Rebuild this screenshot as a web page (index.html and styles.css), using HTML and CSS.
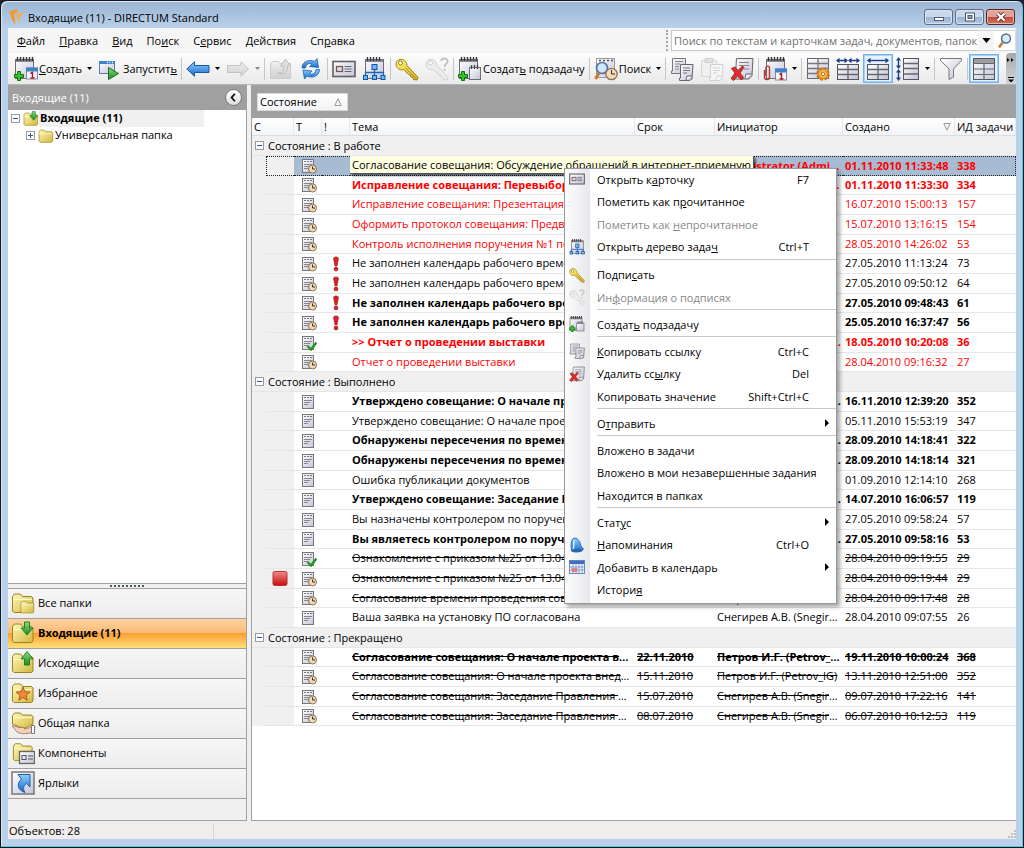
FILE: index.html
```html
<!DOCTYPE html>
<html lang="ru">
<head>
    <meta charset="UTF-8">
    <meta name="viewport" content="width=device-width, initial-scale=1.0">
    <title>Входящие (11) - DIRECTUM Standard</title>
    <link rel="stylesheet" href="styles.css">
</head>
<body>

<!-- icon sprite -->
<svg class="sprite" aria-hidden="true">
    <defs>
        <linearGradient id="g-folder" x1="0" y1="0" x2="1" y2="1"><stop offset="0" stop-color="#fff8b8"/><stop offset="1" stop-color="#d3b83e"/></linearGradient>
        <linearGradient id="g-paper" x1="0" y1="0" x2="1" y2="1"><stop offset="0" stop-color="#ffffff"/><stop offset="1" stop-color="#c3c3d8"/></linearGradient>
        <linearGradient id="g-green" x1="0" y1="0" x2="0" y2="1"><stop offset="0" stop-color="#8fdc7c"/><stop offset="1" stop-color="#1c8a1c"/></linearGradient>
        <linearGradient id="g-blue" x1="0" y1="0" x2="0" y2="1"><stop offset="0" stop-color="#8fd0ff"/><stop offset="1" stop-color="#1668c8"/></linearGradient>
        <linearGradient id="g-gray" x1="0" y1="0" x2="0" y2="1"><stop offset="0" stop-color="#f0f0f0"/><stop offset="1" stop-color="#cfcfcf"/></linearGradient>
        <linearGradient id="g-key" x1="0" y1="0" x2="1" y2="1"><stop offset="0" stop-color="#fff27a"/><stop offset="1" stop-color="#d8b023"/></linearGradient>
        <linearGradient id="g-red" x1="0" y1="0" x2="0" y2="1"><stop offset="0" stop-color="#f58b8b"/><stop offset="1" stop-color="#c80a0a"/></linearGradient>
    </defs>
    <symbol id="pad" viewBox="0 0 24 24">
        <rect x="1.500" y="2.500" width="18" height="19" fill="url(#g-paper)" stroke="#6d6d75"/>
        <path d="M2 3h17v2H2z" fill="#8a8a92"/>
        <path d="M3.500 0v4M6.500 0v4M9.500 0v4M12.500 0v4M15.500 0v4M18.500 0v4" stroke="#33333a" stroke-width="1.400"/>
    </symbol>
    <symbol id="plus" viewBox="0 0 10 10"><path d="M3.500.5h3v3h3v3h-3v3h-3v-3h-3v-3h3z" fill="#3cc02a" stroke="#0f7410"/></symbol>
    <symbol id="cal" viewBox="0 0 12 12">
        <rect x=".5" y=".5" width="11" height="11" fill="#f4f4fa" stroke="#8c8ca0"/>
        <path d="M0 0h12v4H0z" fill="#3c83cc"/><path d="M4.500 6l2-1v5M4.500 10.500h4" stroke="#a02020" stroke-width="1.400" fill="none"/>
    </symbol>
    <symbol id="create" viewBox="0 0 24 24"><use href="#pad" width="24" height="24"/><use href="#cal" x="12" y="10" width="12" height="13"/><use href="#plus" x="0" y="14" width="10" height="10"/></symbol>
    <symbol id="run" viewBox="0 0 24 24">
        <rect x="1.500" y="4.500" width="15" height="12" fill="url(#g-paper)" stroke="#4f7fb4"/><path d="M1 4h16v3H1z" fill="#3c83cc"/><path d="M9 5.500h1M11.500 5.500h1M14 5.500h1" stroke="#fff" stroke-width="1.500"/>
        <path d="M10.500 10.500v12l10-6z" fill="url(#g-green)" stroke="#12731a"/>
    </symbol>
    <symbol id="back" viewBox="0 0 24 24"><path d="M.8 12L8.500 4.800v3.700h14.500v7H8.500v3.700z" fill="url(#g-blue)" stroke="#1a56a8"/></symbol>
    <symbol id="forward" viewBox="0 0 24 24"><path d="M22.500 12L15 4.800v3.700H1.500v7H15v3.700z" fill="url(#g-gray)" stroke="#c3c3c3"/></symbol>
    <symbol id="up" viewBox="0 0 24 24"><path d="M1.500 21.500v-15l2-2h6l2 2h10v15z" fill="url(#g-gray)" stroke="#cccccc"/><path d="M9 16c5 .5 6-2 5.500-7h-3l5-7 5 7h-3c.5 7-4 9-9.500 7z" fill="#dedede" stroke="#bdbdbd"/></symbol>
    <symbol id="refresh" viewBox="0 0 24 24">
        <path d="M3 11c0-7 8-9 12.500-6.500L18 1.500l1.500 9-9-1 2.500-2.500c-3-1.500-6 0-6.500 4z" fill="url(#g-blue)" stroke="#1860b4" stroke-width=".8"/>
        <path d="M20.500 12.500c0 7-8 9-12.500 6.500L5.500 22 4 13l9 1-2.500 2.500c3 1.500 6 0 6.500-4z" fill="url(#g-blue)" stroke="#1860b4" stroke-width=".8"/>
    </symbol>
    <symbol id="card" viewBox="0 0 24 24"><rect x="1" y="4.500" width="22" height="15" fill="url(#g-paper)" stroke="#5f5f68" stroke-width="1.600"/><rect x="4.500" y="9.500" width="6" height="5" fill="#e8dada" stroke="#6d5a5a" stroke-width="1.300"/><path d="M12.500 9.500h7M12.500 12h7M12.500 14.500h7" stroke="#66666e" stroke-width="1.200"/></symbol>
    <symbol id="tree" viewBox="0 0 24 24">
        <rect x="3.500" y="2.500" width="18" height="19" fill="url(#g-paper)" stroke="#6d6d75"/><path d="M4 3h17v2H4z" fill="#8a8a92"/><path d="M5.500 0v4M8.500 0v4M11.500 0v4M14.500 0v4M17.500 0v4" stroke="#33333a" stroke-width="1.300"/>
        <path d="M12.500 11v9M3.500 20v-4.500h18V20" stroke="#1d66b8" stroke-width="1.300" fill="none"/>
        <g fill="#6db8f8" stroke="#0e54a8"><rect x="10" y="7.500" width="5" height="5"/><rect x="1.500" y="18.500" width="4" height="4"/><rect x="10.500" y="18.500" width="4" height="4"/><rect x="19" y="18.500" width="4" height="4"/></g>
    </symbol>
    <symbol id="key" viewBox="0 0 24 24"><path d="M12 8.500l11 12-1 2.500-3.500-.5-.5-2-2-.5-.5-2-2-.5-5-5C4 14 1 10 1 7c0-6 10-7 11 1.500z" fill="url(#g-key)" stroke="#a08010"/><circle cx="5.500" cy="6" r="2" fill="#fff" stroke="#a08010"/><path d="M10.500 11l10.500 10.500" stroke="#a88a18" fill="none"/></symbol>
    <symbol id="key-info" viewBox="0 0 24 24"><path d="M12 8.500l11 12-1 2.500-3.500-.5-.5-2-2-.5-.5-2-2-.5-5-5C4 14 1 10 1 7c0-6 10-7 11 1.500z" fill="#ededed" stroke="#cecece"/><circle cx="5.500" cy="6" r="2" fill="#fff" stroke="#cecece"/><path d="M16 4c1-3.500 7-3 6.500.5-.3 2.500-3 2.500-3 5.500M19.500 12v2" stroke="#c4c4c4" stroke-width="2" fill="none"/></symbol>
    <symbol id="subtask" viewBox="0 0 24 24"><use href="#pad" width="24" height="24"/><rect x="11.500" y="10.500" width="11" height="12" fill="url(#g-paper)" stroke="#6d6d75"/><path d="M13.500 8v4M16.500 8v4M19.500 8v4" stroke="#44444c" stroke-width="1.300"/><use href="#plus" x="0" y="14" width="10" height="10"/></symbol>
    <symbol id="find" viewBox="0 0 24 24">
        <rect x="2.500" y="1.500" width="18" height="19" fill="url(#g-paper)" stroke="#9a9aa2"/><path d="M5 3.500h2M9 3.500h2M13 3.500h2M17 3.500h2" stroke="#55555c" stroke-width="1.500"/>
        <circle cx="8" cy="11" r="5.500" fill="#cfe6fb" stroke="#55749c" stroke-width="1.700"/><path d="M5 16l-3.500 6" stroke="#d2772a" stroke-width="3"/>
        <circle cx="17.500" cy="17" r="5.700" fill="#f2dbb8" stroke="#8c7258" stroke-width="1.300"/><path d="M17.500 13v4h3.500" stroke="#333" fill="none"/>
    </symbol>
    <symbol id="copy" viewBox="0 0 24 24">
        <path d="M2.500 1.500h13v15h-14v-2.500h1z" fill="url(#g-paper)" stroke="#77777e"/><path d="M5 4.500h8M5 7h5M5 9.500h4M5 12h4" stroke="#85858c"/>
        <path d="M10.500 7.500h12.500l-1 14.500-2.500 1.500h-10v-2.500h1z" fill="url(#g-paper)" stroke="#66666d"/><path d="M13 11h7M13 13.500h7M13 16h4" stroke="#77777e"/><path d="M16 23l1-4h5" fill="#fff" stroke="#66666d"/>
    </symbol>
    <symbol id="paste" viewBox="0 0 24 24"><path d="M1.500 3.500h15v16h-15z" fill="#f0f0f0" stroke="#d6d6d6"/><path d="M5 1.500h8v4H5z" fill="#e2e2e2" stroke="#d0d0d0"/><path d="M10.500 7.500h12.500l-1 14.500-2.500 1.500h-10v-2.500h1z" fill="#f6f6f6" stroke="#d0d0d0"/><path d="M13 11h7M13 13.500h7M13 16h4M16 23l1-4h5" fill="none" stroke="#d4d4d4"/></symbol>
    <symbol id="unlink" viewBox="0 0 24 24"><path d="M6.500 1.500h16.500l-1 17-3 3.500H4.500v-4h1z" fill="url(#g-paper)" stroke="#66666d"/><path d="M9 5.500h10M9 8.500h10M14 12h5" stroke="#85858c"/><path d="M15 21.500l1-4.500h6" fill="#fff" stroke="#66666d"/><path d="M1.500 11.500L5 10l3 3.500L12.500 9l1.500 1.500-4 5.500 3.500 4.500-2 2.500-4-4L3.500 23.500l-2.500-2L5 16z" fill="#de2f2f" stroke="#9c1010" stroke-width=".8"/></symbol>
    <symbol id="attach" viewBox="0 0 24 24"><use href="#pad" x="2" width="24" height="24"/><path d="M1.500 13v7c0 3.500 5 3.500 5 0v-9c0-2.500-3.500-2.500-3.500 0v8" fill="none" stroke="#b03838" stroke-width="1.400"/><use href="#cal" x="12" y="11" width="12" height="13"/></symbol>
    <symbol id="grid-gear" viewBox="0 0 24 24">
        <rect x="1.500" y="1.500" width="21" height="20" fill="url(#g-paper)" stroke="#66666d"/><path d="M1.500 6.500h21M1.500 11.500h21M1.500 16.500h21M12 1.500v20" stroke="#77777e" stroke-width="1.300"/>
        <circle cx="17" cy="17" r="5.500" fill="#f5a732" stroke="#c9741a" stroke-width="2.500" stroke-dasharray="2.600 1.700"/><circle cx="17" cy="17" r="4.500" fill="#f9b548" stroke="#d98820"/><circle cx="17" cy="17" r="1.700" fill="#fff" stroke="#c9741a"/>
    </symbol>
    <symbol id="grid" viewBox="0 0 24 24"><rect x="1.500" y="1.500" width="21" height="21" fill="url(#g-paper)" stroke="#55555c"/><path d="M2 2h20v4H2z" fill="#9c9ca2"/><path d="M1.500 6.500h21M1.500 12h21M1.500 17.500h21M12 6.500v16" stroke="#66666d" stroke-width="1.200"/></symbol>
    <symbol id="grid-low" viewBox="0 0 24 24"><rect x="1.500" y="7.500" width="21" height="15" fill="url(#g-paper)" stroke="#55555c"/><path d="M1.500 12.500h21M1.500 17.500h21M12 8v14" stroke="#66666d" stroke-width="1.300"/></symbol>
    <symbol id="cols" viewBox="0 0 24 24"><use href="#grid-low" width="24" height="24"/><path d="M1.500 3.500h9M13.500 3.500h9" stroke="#1a3f8c" stroke-width="1.400"/><path d="M0 3.500L3.500.8v5.400zM12 3.500L8.500.8v5.400zM12 3.500L15.500.8v5.400zM24 3.500L20.500.8v5.400z" fill="#1a3f8c"/></symbol>
    <symbol id="fit" viewBox="0 0 24 24"><use href="#grid-low" width="24" height="24"/><path d="M2 3.500h20" stroke="#1a3f8c" stroke-width="1.400"/><path d="M1 3.500L4.500.8v5.400zM23 3.500L19.500.8v5.400z" fill="#1a3f8c"/></symbol>
    <symbol id="rows" viewBox="0 0 24 24"><rect x="7.500" y="1.500" width="15" height="21" fill="url(#g-paper)" stroke="#55555c"/><path d="M7.500 6.500h15M7.500 11.500h15M7.500 17h15" stroke="#66666d" stroke-width="1.300"/><path d="M2.500 2v9M2.500 14v8" stroke="#1a3f8c" stroke-width="1.400"/><path d="M2.500 0l2.500 3.500H0zM2.500 12L0 8.500h5zM2.500 12L5 15.500H0zM2.500 24L0 20.500h5z" fill="#1a3f8c"/></symbol>
    <symbol id="funnel" viewBox="0 0 24 24"><path d="M1.500 1.500h21v2l-8 8.500v8l-4.500 2.500V12L1.500 3.500z" fill="url(#g-paper)" stroke="#77777e"/></symbol>
    <symbol id="folder" viewBox="0 0 24 24"><path d="M1.500 20V5.500l2-2.500h6l2 2.500h9l1.500 1.500V20l-1.500 1.500H3z" fill="url(#g-folder)" stroke="#9a8420"/><path d="M2 8.500h19" stroke="#fffbd0"/></symbol>
    <symbol id="inbox" viewBox="0 0 24 24"><use href="#folder" width="24" height="24"/><path d="M13.500 1h5v6H22l-6 7-6-7h3.500z" fill="url(#g-green)" stroke="#23802a"/></symbol>
    <symbol id="outbox" viewBox="0 0 24 24"><use href="#folder" width="24" height="24"/><path d="M13.500 14h5V8H22l-6-7.500L10 8h3.500z" fill="url(#g-green)" stroke="#23802a"/></symbol>
    <symbol id="folders" viewBox="0 0 24 24"><use href="#folder" width="24" height="24"/><use href="#folder" x="9" y="8" width="15" height="16"/></symbol>
    <symbol id="favorite" viewBox="0 0 24 24"><use href="#folder" width="24" height="24"/><path d="M12 6l1.900 4.800 5 .3-3.900 3.200 1.300 5-4.300-2.800-4.300 2.800 1.300-5L5.100 11.100l5-.3z" fill="#ee8a3c" stroke="#b85a18"/></symbol>
    <symbol id="shared" viewBox="0 0 24 24"><path d="M1.500 13V4.500l2-2.500h6l2 2h9l1.500 1.500V13l-8 4-5-1z" fill="url(#g-folder)" stroke="#9a8420"/><path d="M2 6.500h19" stroke="#fffbd0"/><path d="M1 15c3-1 5 2 9 1.500 2-.5 4 0 3 1.500l6-1.500 2-1v6c-5 1.500-10 1.500-13 .5-3-1-4-4-7-7z" fill="#f4d0b4" stroke="#94705a" stroke-width=".8"/><path d="M20.500 14.500h3v8h-3z" fill="#fff" stroke="#77777e"/></symbol>
    <symbol id="components" viewBox="0 0 24 24"><use href="#folder" width="24" height="22"/><rect x="8.500" y="10.500" width="15" height="12" fill="url(#g-paper)" stroke="#66666d" stroke-width="1.300"/><rect x="11" y="14.500" width="4" height="4" fill="none" stroke="#55555c"/><path d="M17 15h5M17 18h5" stroke="#55555c"/></symbol>
    <symbol id="shortcut" viewBox="0 0 24 24"><rect x="1" y="1" width="22" height="22" fill="url(#g-paper)" stroke="#77777e" stroke-width="1.500"/><path d="M7 3.500h12V16l-3.500-3.500c-3 2.500-4 5-1.500 9-7-2-9-8.500-3.500-13.500z" fill="url(#g-blue)" stroke="#1a60b0"/></symbol>
    <symbol id="bell" viewBox="0 0 16 16"><path d="M4 1.500c4-1.500 6.500 2 7.500 6 .5 2 1.500 3 3 4.500-2 3-8 4-12 2C2.500 11 1 5 4 1.500z" fill="url(#g-blue)" stroke="#2868b0"/><path d="M5 3c0 3-.5 6-.5 9" stroke="#cfeaff" stroke-width="1.500" fill="none"/><ellipse cx="8.500" cy="13.200" rx="5" ry="1.500" fill="#2a66ae"/></symbol>
    <symbol id="calendar" viewBox="0 0 16 16"><rect x=".5" y="1.500" width="15" height="13" fill="#f4f7fc" stroke="#6a86b4"/><path d="M1 2h14v3H1z" fill="#3c6fc0"/><path d="M1 8h14M1 11h14M4 5v9M7 5v9M10 5v9M13 5v9" stroke="#86a0cc"/><path d="M2.500 9h6v4h-6z" fill="#e06a6a" opacity=".7"/></symbol>
    <symbol id="t-doc" viewBox="0 0 16 16"><rect x="1.500" y="1.500" width="11" height="13" fill="url(#g-paper)" stroke="#77777e"/><path d="M3 3.500h2M6 3.500h2M9 3.500h2" stroke="#77777e"/><path d="M3 6.500h8M3 8.500h6M3 10.500h4" stroke="#85858c"/></symbol>
    <symbol id="t-clock" viewBox="0 0 16 16"><use href="#t-doc" width="16" height="16"/><circle cx="11.500" cy="11" r="4" fill="#f0dab6" stroke="#8c7258"/><path d="M11.500 8.500V11H14" stroke="#333" fill="none"/></symbol>
    <symbol id="t-check" viewBox="0 0 16 16"><use href="#t-doc" width="16" height="16"/><path d="M6.500 11l3.500 3.500 5.500-7" stroke="#22961e" stroke-width="2.400" fill="none"/></symbol>
    <symbol id="urgent" viewBox="0 0 8 16"><path d="M1.500 2.500c0-2 5-2 5 0L5 10H3z" fill="#d8242a" stroke="#a01418" stroke-width=".6"/><circle cx="4" cy="13" r="2" fill="#d8242a" stroke="#a01418" stroke-width=".6"/></symbol>
    <symbol id="stop" viewBox="0 0 16 16"><rect x=".5" y=".5" width="15" height="15" rx="2" fill="url(#g-red)" stroke="#b83030"/></symbol>
    <symbol id="caret" viewBox="0 0 5 3"><path d="M0 0h5L2.500 3z" fill="currentColor"/></symbol>
    <symbol id="arrow" viewBox="0 0 4 8"><path d="M0 0v8l4-4z"/></symbol>
    <symbol id="minus-box" viewBox="0 0 9 9"><rect x=".5" y=".5" width="8" height="8" fill="#fff" stroke="#9a9a9a"/><path d="M2 4.500h5" stroke="#3c50a0"/></symbol>
    <symbol id="plus-box" viewBox="0 0 9 9"><rect x=".5" y=".5" width="8" height="8" fill="#fff" stroke="#9a9a9a"/><path d="M2 4.500h5M4.500 2v5" stroke="#3c50a0"/></symbol>
    <symbol id="magnifier" viewBox="0 0 16 16"><path d="M5.500 9.500L2 14.500" stroke="#d2772a" stroke-width="2.500"/><circle cx="9" cy="5.500" r="4.500" fill="#d5ebfb" stroke="#5a6f86" stroke-width="1.500"/></symbol>
</svg>

<div class="window">
    <header class="titlebar">
        <svg class="logo" viewBox="0 0 16 16" aria-hidden="true"><path d="M.5 4C3 2 6 .8 10 .3L8.800 3.500C6.500 4 6 5 6.300 6.500c.5 3 1.200 5 .9 9C5 13 3.300 10.500 3 7.500 2.800 5.500 2.300 4.500.5 4z" fill="#f39a2b"/><path d="M7.500 6.500c2-1.700 4-2.500 7.500-3L14 6.500c-2 .3-2.700 1-2.500 2.500.2 1.500.3 2.500.1 4.500C10 12 9.300 10.500 9.200 9c-.1-1.200-.6-2-1.700-2.500z" fill="#f7ad4a"/></svg>
        <h1>Входящие (11) - DIRECTUM Standard</h1>
        <div class="window-buttons">
            <button type="button" aria-label="Свернуть"><svg viewBox="0 0 12 10" aria-hidden="true"><rect x="1.500" y="5.500" width="9" height="3" fill="#fff" stroke="#4d5b70"/></svg></button>
            <button type="button" aria-label="Развернуть"><svg viewBox="0 0 12 10" aria-hidden="true"><rect x="1.500" y="1" width="9" height="8" fill="#fff" stroke="#4d5b70"/><rect x="4" y="3.500" width="4" height="3" fill="#8fa5c2" stroke="#4d5b70"/></svg></button>
            <button type="button" class="close" aria-label="Закрыть"><svg viewBox="0 0 12 10" aria-hidden="true"><path d="M2.500 1.500l7 7M9.500 1.500l-7 7" stroke="#5a2a2a" stroke-width="4"/><path d="M2.500 1.500l7 7M9.500 1.500l-7 7" stroke="#fff" stroke-width="2.400"/></svg></button>
        </div>
    </header>

    <div class="menubar">
        <nav>
            <a href="#"><u>Ф</u>айл</a>
            <a href="#"><u>П</u>равка</a>
            <a href="#"><u>В</u>ид</a>
            <a href="#">По<u>и</u>ск</a>
            <a href="#">С<u>е</u>рвис</a>
            <a href="#"><u>Д</u>ействия</a>
            <a href="#">Сп<u>р</u>авка</a>
        </nav>
        <form class="search">
            <input type="text" aria-label="Поиск" placeholder="Поиск по текстам и карточкам задач, документов, папок">
            <button type="button" aria-label="История поиска"><svg width="9" height="5" aria-hidden="true"><use href="#caret"/></svg></button>
            <button type="button" class="go" aria-label="Найти"><svg width="16" height="16" aria-hidden="true"><use href="#magnifier"/></svg></button>
        </form>
    </div>

    <div class="toolbar">
        <button type="button"><svg class="i24"><use href="#create"/></svg><span><u>С</u>оздать</span></button>
        <button type="button" class="drop" aria-label="Создать: меню"><svg><use href="#caret"/></svg></button>
        <button type="button"><svg class="i24"><use href="#run"/></svg><span>Запустит<u>ь</u></span></button>
        <i class="sep"></i>
        <button type="button" aria-label="Назад"><svg class="i24"><use href="#back"/></svg></button>
        <button type="button" class="drop" aria-label="Назад: меню"><svg><use href="#caret"/></svg></button>
        <button type="button" disabled aria-label="Вперед"><svg class="i24"><use href="#forward"/></svg></button>
        <button type="button" class="drop" disabled aria-label="Вперед: меню"><svg><use href="#caret"/></svg></button>
        <i class="sep"></i>
        <button type="button" disabled aria-label="Вверх"><svg class="i24"><use href="#up"/></svg></button>
        <button type="button" aria-label="Обновить"><svg class="i24"><use href="#refresh"/></svg></button>
        <i class="sep"></i>
        <button type="button" aria-label="Карточка"><svg class="i24"><use href="#card"/></svg></button>
        <button type="button" aria-label="Дерево задач"><svg class="i24"><use href="#tree"/></svg></button>
        <i class="sep"></i>
        <button type="button" aria-label="Подписать"><svg class="i24"><use href="#key"/></svg></button>
        <button type="button" disabled aria-label="Информация о подписях"><svg class="i24"><use href="#key-info"/></svg></button>
        <i class="sep"></i>
        <button type="button"><svg class="i24"><use href="#subtask"/></svg><span>Создат<u>ь</u> подзадачу</span></button>
        <i class="sep"></i>
        <button type="button"><svg class="i24"><use href="#find"/></svg><span>Поиск</span></button>
        <button type="button" class="drop" aria-label="Поиск: меню"><svg><use href="#caret"/></svg></button>
        <i class="sep"></i>
        <button type="button" aria-label="Копировать ссылку"><svg class="i24"><use href="#copy"/></svg></button>
        <button type="button" disabled aria-label="Вставить ссылку"><svg class="i24"><use href="#paste"/></svg></button>
        <button type="button" aria-label="Удалить ссылку"><svg class="i24"><use href="#unlink"/></svg></button>
        <i class="sep"></i>
        <button type="button" aria-label="Вложения"><svg class="i24"><use href="#attach"/></svg></button>
        <button type="button" class="drop" aria-label="Вложения: меню"><svg><use href="#caret"/></svg></button>
        <i class="sep"></i>
        <button type="button" aria-label="Настройка колонок"><svg class="i24"><use href="#grid-gear"/></svg></button>
        <button type="button" aria-label="Ширина колонок"><svg class="i24"><use href="#cols"/></svg></button>
        <button type="button" class="on" aria-label="По ширине окна"><svg class="i24"><use href="#fit"/></svg></button>
        <button type="button" aria-label="Высота строк"><svg class="i24"><use href="#rows"/></svg></button>
        <button type="button" class="drop" aria-label="Высота строк: меню"><svg><use href="#caret"/></svg></button>
        <i class="sep"></i>
        <button type="button" aria-label="Фильтр"><svg class="i24"><use href="#funnel"/></svg></button>
        <i class="sep"></i>
        <button type="button" class="on" aria-label="Группировка"><svg class="i24"><use href="#grid"/></svg></button>
        <button type="button" class="more" aria-label="Параметры панели"><svg width="8" height="28" viewBox="0 0 8 28" aria-hidden="true"><path d="M0 3l2.500 2L0 7zM4 3l2.500 2L4 7zM1 22h6v1H1zM1 24.500h6L4 27.500z"/></svg></button>
    </div>

    <main>
        <aside>
            <div class="side-head">
                <h2>Входящие (11)</h2>
                <button type="button" aria-label="Скрыть панель"><svg viewBox="0 0 16 16" aria-hidden="true"><path d="M9.500 4L6 8l3.500 4" fill="none" stroke="#111" stroke-width="2"/></svg></button>
            </div>
            <ul class="tree">
                <li class="current"><svg class="box"><use href="#minus-box"/></svg><svg class="i16"><use href="#inbox"/></svg><a href="#">Входящие (11)</a></li>
                <li class="child"><svg class="box"><use href="#plus-box"/></svg><svg class="i16"><use href="#folder"/></svg><a href="#">Универсальная папка</a></li>
            </ul>
            <div class="splitter"></div>
            <nav class="groups">
                <a href="#"><svg class="i24"><use href="#folders"/></svg>Все папки</a>
                <a href="#" class="active"><svg class="i24"><use href="#inbox"/></svg>Входящие (11)</a>
                <a href="#"><svg class="i24"><use href="#outbox"/></svg>Исходящие</a>
                <a href="#"><svg class="i24"><use href="#favorite"/></svg>Избранное</a>
                <a href="#"><svg class="i24"><use href="#shared"/></svg>Общая папка</a>
                <a href="#"><svg class="i24"><use href="#components"/></svg>Компоненты</a>
                <a href="#"><svg class="i24"><use href="#shortcut"/></svg>Ярлыки</a>
            </nav>
            <div class="groups-foot"></div>
        </aside>

        <section class="list">
            <div class="group-by">
                <button type="button">Состояние <svg width="8" height="8" viewBox="0 0 8 8" aria-hidden="true"><path d="M4 .8L7.200 7.500H.8z" fill="none" stroke="#999"/></svg></button>
            </div>
            <table>
                <colgroup><col class="c-indent"><col class="c-flag"><col class="c-type"><col class="c-type"><col><col class="c-due"><col class="c-from"><col class="c-date"><col class="c-id"></colgroup>
                <thead>
                    <tr><th colspan="2">С</th><th>Т</th><th>!</th><th>Тема</th><th>Срок</th><th>Инициатор</th><th>Создано <svg width="8" height="8" viewBox="0 0 8 8" aria-hidden="true"><path d="M4 7.200L7.200.5H.8z" fill="none" stroke="#999"/></svg></th><th>ИД задачи</th></tr>
                </thead>
                <tbody>
                    <tr class="group"><td colspan="9"><svg class="box"><use href="#minus-box"/></svg>Состояние : В работе</td></tr>
                    <tr class="b red selected"><td></td><td></td><td><svg class="i16"><use href="#t-clock"/></svg></td><td></td><td class="tip-cell"><div class="tooltip" role="tooltip">Согласование совещания: Обсуждение обращений в интернет-приемную</div></td><td></td><td>Administrator (Administrator)</td><td>01.11.2010 11:33:48</td><td>338</td></tr>
                    <tr class="b red"><td></td><td></td><td><svg class="i16"><use href="#t-clock"/></svg></td><td></td><td>Исправление совещания: Перевыборы председателя</td><td></td><td>Administrator (Administrator)</td><td>01.11.2010 11:33:30</td><td>334</td></tr>
                    <tr class="red"><td></td><td></td><td><svg class="i16"><use href="#t-clock"/></svg></td><td></td><td>Исправление совещания: Презентация изделий</td><td></td><td>Петров И.Г.</td><td>16.07.2010 15:00:13</td><td>157</td></tr>
                    <tr class="red"><td></td><td></td><td><svg class="i16"><use href="#t-clock"/></svg></td><td></td><td>Оформить протокол совещания: Предварительное</td><td></td><td>Петров И.Г.</td><td>15.07.2010 13:16:15</td><td>154</td></tr>
                    <tr class="red"><td></td><td></td><td><svg class="i16"><use href="#t-clock"/></svg></td><td></td><td>Контроль исполнения поручения №1 по протоколу</td><td></td><td>Снегирев А.В. (Snegirev_AV)</td><td>28.05.2010 14:26:02</td><td>53</td></tr>
                    <tr><td></td><td></td><td><svg class="i16"><use href="#t-clock"/></svg></td><td><svg class="mark"><use href="#urgent"/></svg></td><td>Не заполнен календарь рабочего времени</td><td></td><td>Снегирев А.В. (Snegirev_AV)</td><td>27.05.2010 11:13:24</td><td>73</td></tr>
                    <tr><td></td><td></td><td><svg class="i16"><use href="#t-clock"/></svg></td><td><svg class="mark"><use href="#urgent"/></svg></td><td>Не заполнен календарь рабочего времени</td><td></td><td>Снегирев А.В. (Snegirev_AV)</td><td>27.05.2010 09:50:12</td><td>64</td></tr>
                    <tr class="b"><td></td><td></td><td><svg class="i16"><use href="#t-clock"/></svg></td><td><svg class="mark"><use href="#urgent"/></svg></td><td>Не заполнен календарь рабочего времени</td><td></td><td>Петров И.Г.</td><td>27.05.2010 09:48:43</td><td>61</td></tr>
                    <tr class="b"><td></td><td></td><td><svg class="i16"><use href="#t-clock"/></svg></td><td><svg class="mark"><use href="#urgent"/></svg></td><td>Не заполнен календарь рабочего времени</td><td></td><td>Петров И.Г.</td><td>25.05.2010 16:37:47</td><td>56</td></tr>
                    <tr class="b red"><td></td><td></td><td><svg class="i16"><use href="#t-check"/></svg></td><td></td><td>&gt;&gt; Отчет о проведении выставки</td><td></td><td>Снегирев А.В. (Snegirev_AV)</td><td>18.05.2010 10:20:08</td><td>36</td></tr>
                    <tr class="red"><td></td><td></td><td><svg class="i16"><use href="#t-clock"/></svg></td><td></td><td>Отчет о проведении выставки</td><td></td><td>Петров И.Г.</td><td>28.04.2010 09:16:32</td><td>27</td></tr>
                    <tr class="group"><td colspan="9"><svg class="box"><use href="#minus-box"/></svg>Состояние : Выполнено</td></tr>
                    <tr class="b"><td></td><td></td><td><svg class="i16"><use href="#t-doc"/></svg></td><td></td><td>Утверждено совещание: О начале проекта</td><td></td><td>Снегирев А.В. (Snegirev_AV)</td><td>16.11.2010 12:39:20</td><td>352</td></tr>
                    <tr><td></td><td></td><td><svg class="i16"><use href="#t-doc"/></svg></td><td></td><td>Утверждено совещание: О начале проекта</td><td></td><td>Петров И.Г.</td><td>05.11.2010 15:53:19</td><td>347</td></tr>
                    <tr class="b"><td></td><td></td><td><svg class="i16"><use href="#t-doc"/></svg></td><td></td><td>Обнаружены пересечения по времени</td><td></td><td>Снегирев А.В. (Snegirev_AV)</td><td>28.09.2010 14:18:41</td><td>322</td></tr>
                    <tr class="b"><td></td><td></td><td><svg class="i16"><use href="#t-doc"/></svg></td><td></td><td>Обнаружены пересечения по времени</td><td></td><td>Снегирев А.В. (Snegirev_AV)</td><td>28.09.2010 14:18:14</td><td>321</td></tr>
                    <tr><td></td><td></td><td><svg class="i16"><use href="#t-doc"/></svg></td><td></td><td>Ошибка публикации документов</td><td></td><td>Петров И.Г.</td><td>01.09.2010 12:14:10</td><td>268</td></tr>
                    <tr class="b"><td></td><td></td><td><svg class="i16"><use href="#t-doc"/></svg></td><td></td><td>Утверждено совещание: Заседание Правления</td><td></td><td>Снегирев А.В. (Snegirev_AV)</td><td>14.07.2010 16:06:57</td><td>119</td></tr>
                    <tr><td></td><td></td><td><svg class="i16"><use href="#t-doc"/></svg></td><td></td><td>Вы назначены контролером по поручению</td><td></td><td>Снегирев А.В. (Snegirev_AV)</td><td>27.05.2010 09:58:24</td><td>57</td></tr>
                    <tr class="b"><td></td><td></td><td><svg class="i16"><use href="#t-doc"/></svg></td><td></td><td>Вы являетесь контролером по поручению</td><td></td><td>Снегирев А.В. (Snegirev_AV)</td><td>27.05.2010 09:58:16</td><td>53</td></tr>
                    <tr class="done"><td></td><td></td><td><svg class="i16"><use href="#t-check"/></svg></td><td></td><td>Ознакомление с приказом №25 от 13.04.2010</td><td></td><td>Петров И.Г.</td><td>28.04.2010 09:19:55</td><td>29</td></tr>
                    <tr class="done"><td></td><td><svg class="stop"><use href="#stop"/></svg></td><td><svg class="i16"><use href="#t-clock"/></svg></td><td></td><td>Ознакомление с приказом №25 от 13.04.2010</td><td></td><td>Петров И.Г.</td><td>28.04.2010 09:19:44</td><td>29</td></tr>
                    <tr class="done"><td></td><td></td><td><svg class="i16"><use href="#t-clock"/></svg></td><td></td><td>Согласование времени проведения совещания</td><td></td><td>Петров И.Г.</td><td>28.04.2010 09:17:48</td><td>28</td></tr>
                    <tr><td></td><td></td><td><svg class="i16"><use href="#t-doc"/></svg></td><td></td><td>Ваша заявка на установку ПО согласована</td><td></td><td>Снегирев А.В. (Snegirev_AV)</td><td>28.04.2010 09:07:55</td><td>26</td></tr>
                    <tr class="group"><td colspan="9"><svg class="box"><use href="#minus-box"/></svg>Состояние : Прекращено</td></tr>
                    <tr class="b done"><td></td><td></td><td><svg class="i16"><use href="#t-clock"/></svg></td><td></td><td>Согласование совещания: О начале проекта внедрения</td><td>22.11.2010</td><td>Петров И.Г. (Petrov_IG)</td><td>19.11.2010 10:00:24</td><td>368</td></tr>
                    <tr class="done"><td></td><td></td><td><svg class="i16"><use href="#t-clock"/></svg></td><td></td><td>Согласование совещания: О начале проекта внедрения</td><td>15.11.2010</td><td>Петров И.Г. (Petrov_IG)</td><td>13.11.2010 12:51:00</td><td>352</td></tr>
                    <tr class="done"><td></td><td></td><td><svg class="i16"><use href="#t-clock"/></svg></td><td></td><td>Согласование совещания: Заседание Правления Общества</td><td>15.07.2010</td><td>Снегирев А.В. (Snegirev_AV)</td><td>09.07.2010 17:22:16</td><td>141</td></tr>
                    <tr class="done"><td></td><td></td><td><svg class="i16"><use href="#t-clock"/></svg></td><td></td><td>Согласование совещания: Заседание Правления Общества</td><td>08.07.2010</td><td>Снегирев А.В. (Snegirev_AV)</td><td>06.07.2010 10:12:53</td><td>119</td></tr>
                </tbody>
            </table>
        </section>
    </main>

    <footer class="statusbar">
        <span>Объектов: 28</span>
        <svg width="10" height="10" viewBox="0 0 10 10" aria-hidden="true"><path d="M8 2h2M8 5h2M8 8h2M5 5h2M5 8h2M2 8h2" stroke="#b5b0b0" stroke-width="1.500"/></svg>
    </footer>
</div>

<ul class="context-menu" role="menu">
    <li><button type="button"><svg class="i16"><use href="#card"/></svg><span>Открыть к<u>а</u>рточку</span><kbd>F7</kbd></button></li>
    <li><button type="button"><span>Пометить как п<u>р</u>очитанное</span></button></li>
    <li><button type="button" disabled><span>Пометить как <u>н</u>епрочитанное</span></button></li>
    <li><button type="button"><svg class="i16"><use href="#tree"/></svg><span>Открыть дерево зада<u>ч</u></span><kbd>Ctrl+T</kbd></button></li>
    <li class="line"></li>
    <li><button type="button"><svg class="i16"><use href="#key"/></svg><span>Подпи<u>с</u>ать</span></button></li>
    <li><button type="button" disabled><svg class="i16"><use href="#key-info"/></svg><span>Ин<u>ф</u>ормация о подписях</span></button></li>
    <li class="line"></li>
    <li><button type="button"><svg class="i16"><use href="#subtask"/></svg><span>Создат<u>ь</u> подзадачу</span></button></li>
    <li class="line"></li>
    <li><button type="button"><svg class="i16"><use href="#copy"/></svg><span><u>К</u>опировать ссылку</span><kbd>Ctrl+C</kbd></button></li>
    <li><button type="button"><svg class="i16"><use href="#unlink"/></svg><span>Удалить сс<u>ы</u>лку</span><kbd>Del</kbd></button></li>
    <li><button type="button"><span>Копировать значение</span><kbd>Shift+Ctrl+C</kbd></button></li>
    <li class="line"></li>
    <li><button type="button"><span>О<u>т</u>править</span><svg class="sub"><use href="#arrow"/></svg></button></li>
    <li class="line"></li>
    <li><button type="button"><span>Вложено в задачи</span></button></li>
    <li><button type="button"><span>Вложено в мои незавершенные задания</span></button></li>
    <li><button type="button"><span>Находится в папках</span></button></li>
    <li class="line"></li>
    <li><button type="button"><span>Стат<u>у</u>с</span><svg class="sub"><use href="#arrow"/></svg></button></li>
    <li><button type="button"><svg class="i16"><use href="#bell"/></svg><span><u>Н</u>апоминания</span><kbd>Ctrl+O</kbd></button></li>
    <li><button type="button"><svg class="i16"><use href="#calendar"/></svg><span>Добавить в календарь</span><svg class="sub"><use href="#arrow"/></svg></button></li>
    <li><button type="button"><span>Истори<u>я</u></span></button></li>
</ul>

</body>
</html>
```

FILE: styles.css
```css
* {
    box-sizing: border-box;
}
body {
    margin: 0;
    background-color: #1c2430;
    font-family: "Open Sans", "Noto Sans", sans-serif;
    font-size: 11px;
    line-height: 15px;
    color: #000;
}
button, input, kbd {
    font: inherit;
    color: inherit;
}
button {
    padding: 0;
    border: none;
    background: none;
}
a {
    color: inherit;
    text-decoration: none;
}
h1, h2 {
    margin: 0;
    font-size: 11px;
    font-weight: normal;
}
ul {
    margin: 0;
    padding: 0;
    list-style: none;
}
svg {
    display: block;
    flex: none;
}
.sprite {
    position: absolute;
    width: 0;
    height: 0;
}
.i24 {
    width: 24px;
    height: 24px;
}
.i16 {
    width: 16px;
    height: 16px;
}
.box {
    width: 9px;
    height: 9px;
}

/* window frame */
.window {
    display: flex;
    flex-direction: column;
    min-height: 100vh;
    padding: 0 7px 8px;
    border: 1px solid #10161e;
    border-radius: 7px 7px 0 0;
    background: linear-gradient(#9ab4d3, #b9d1ea 28px);
    box-shadow: inset -1px -1px #48cfe6, inset 1px 1px #dce8f5;
}
.titlebar {
    display: flex;
    align-items: center;
    height: 27px;
    padding: 5px 1px 0 0;
}
.logo {
    width: 16px;
    height: 16px;
    margin-right: 4px;
}
.window-buttons {
    display: flex;
    gap: 2px;
    margin-left: auto;
}
.window-buttons button {
    display: flex;
    align-items: center;
    justify-content: center;
    width: 29px;
    height: 16px;
    border: 1px solid #5b6f8c;
    border-radius: 3px;
    background: linear-gradient(#c9d8ea 50%, #9bb2ce 50%, #b5cae2);
    box-shadow: inset 0 0 0 1px #d5e2f0;
}
.window-buttons .close {
    border-color: #5c2323;
    background: linear-gradient(#e0a397 50%, #c34a35 50%, #d07460);
    box-shadow: inset 0 0 0 1px #e8b5aa;
}
.window-buttons svg {
    width: 12px;
    height: 10px;
}

/* menu and toolbar */
.menubar {
    display: flex;
    align-items: center;
    justify-content: space-between;
    height: 25px;
    background-color: #f5f5f5;
}
.menubar nav {
    display: flex;
    gap: 14px;
    padding-left: 9px;
}
.search {
    display: flex;
    align-items: center;
    flex: 0 1 350px;
    height: 21px;
    padding-left: 3px;
    border-left: 2px dotted #a5a5a5;
}
.search input {
    flex: 1;
    min-width: 0;
    height: 21px;
    padding: 0 0 0 2px;
    border: 1px solid #c8c8c8;
    border-right: none;
    background-color: #fff;
}
.search input::placeholder {
    color: #6f6f6f;
}
.search button {
    display: flex;
    align-items: center;
    justify-content: center;
    width: 16px;
    height: 21px;
    border: 1px solid #d8d8d8;
    border-width: 1px 0;
}
.search .go {
    width: 22px;
    border-right-width: 1px;
    background-color: #fff;
}
.toolbar {
    display: flex;
    align-items: center;
    height: 32px;
    padding-left: 3px;
    border-bottom: 1px solid #b4b4b4;
    background: linear-gradient(#fdfdfd, #e9e9e9);
}
.toolbar button {
    display: flex;
    align-items: center;
    gap: 1px;
    height: 29px;
    padding: 0 3px;
    white-space: nowrap;
}
.toolbar .drop {
    width: 10px;
    padding: 0 2px;
    color: #000;
}
.toolbar .drop:disabled {
    color: #888;
}
.toolbar .drop svg {
    width: 5px;
    height: 3px;
}
.toolbar .on {
    padding: 0 2px;
    border: 1px solid #6fb0f0;
    background-color: #e6f1fc;
    box-shadow: inset 0 0 0 1px #a8d2fb;
}
.toolbar .sep {
    width: 1px;
    height: 22px;
    margin: 0 1px;
    background-color: #c6c6c6;
}
.toolbar .more {
    align-self: stretch;
    height: 31px;
    width: 10px;
    margin-left: auto;
    padding: 0 1px;
    border-radius: 4px 0 0 0;
    background: linear-gradient(#a8a8a8, #d5d5d5);
}

/* left panel */
main {
    display: flex;
    flex: 1;
    gap: 4px;
    background-color: #f0f0f0;
}
aside {
    display: flex;
    flex-direction: column;
    flex: none;
    width: 239px;
    border-right: 1px solid #a0a0a0;
    background-color: #fff;
}
.side-head {
    display: flex;
    align-items: center;
    justify-content: space-between;
    height: 25px;
    padding: 0 4px;
    background-color: #a0a0a0;
    color: #fff;
}
.side-head button {
    width: 17px;
    height: 17px;
    border: 1px solid #777;
    border-radius: 50%;
    background: linear-gradient(#fff, #ddd);
}
.side-head svg {
    width: 15px;
    height: 15px;
}
.tree {
    flex: 1;
}
.tree li {
    display: flex;
    align-items: center;
    height: 17px;
    padding-left: 3px;
}
.tree .i16 {
    margin: 0 0 0 3px;
}
.tree a {
    padding: 0 1px 2px;
}
.tree .current a {
    flex: 1;
    margin-right: 42px;
    background-color: #f0f0f0;
    font-weight: bold;
}
.tree .child {
    padding-left: 18px;
}
.splitter {
    height: 5px;
    border-top: 1px solid #a0a0a0;
    background-color: #f0f0f0;
}
.splitter::before {
    content: "";
    display: block;
    width: 34px;
    margin: 1px auto 0;
    border-top: 2px dotted #4a5a5a;
}
.groups a {
    display: flex;
    align-items: center;
    gap: 3px;
    height: 30px;
    padding: 0 0 2px 3px;
    border-top: 1px solid #a0a0a0;
    background: linear-gradient(#f6f6f6, #ededed);
}
.groups .active {
    background: linear-gradient(#fcd3a2, #fdb972 50%, #fb9f32 50%, #fee07a);
    font-weight: bold;
}
.groups-foot {
    height: 23px;
    border: solid #a0a0a0;
    border-width: 1px 0;
    background-color: #f0f0f0;
}

/* task list */
.list {
    flex: 1;
    min-width: 0;
    border-left: 1px solid #a0a0a0;
    border-bottom: 1px solid #a0a0a0;
    background-color: #fff;
}
.group-by {
    display: flex;
    align-items: center;
    height: 33px;
    padding-left: 5px;
    background-color: #a0a0a0;
}
.group-by button {
    display: flex;
    align-items: center;
    justify-content: space-between;
    width: 91px;
    height: 18px;
    padding: 0 5px 0 2px;
    border: 1px solid #d8d8d8;
    background: linear-gradient(#fff, #f2f3f5);
}
table {
    width: 100%;
    table-layout: fixed;
    border-collapse: separate;
    border-spacing: 0;
}
.c-indent {
    width: 14px;
}
.c-flag, .c-type {
    width: 28px;
}
.c-due {
    width: 80px;
}
.c-from {
    width: 128px;
}
.c-date {
    width: 112px;
}
.c-id {
    width: 61px;
}
th {
    height: 18px;
    padding: 0 0 0 2px;
    border-right: 1px solid #e4e8ec;
    border-bottom: 1px solid #d9dde2;
    background: linear-gradient(#fff, #f3f4f6);
    font-weight: normal;
    text-align: left;
    white-space: nowrap;
}
th svg {
    float: right;
    margin: 4px 3px 0 0;
}
tbody tr {
    height: 20px;
}
tbody tr:nth-child(3n) {
    height: 19px;
}
td {
    padding: 0 0 2px 2px;
    border-bottom: 1px solid #e6e6e6;
    overflow: hidden;
    text-overflow: ellipsis;
    white-space: nowrap;
}
td:nth-child(1), td:nth-child(2) {
    padding: 0;
    background-color: #f0f0f0;
}
td:nth-child(1) {
    border-bottom-color: #f0f0f0;
}
td:nth-child(3) {
    padding: 0 0 0 7px;
}
td:nth-child(4) {
    padding: 0 0 0 10px;
}
.group td {
    padding: 0 0 1px 3px;
    border-bottom-color: #e6e6e6;
}
.group .box {
    display: inline-block;
    margin-right: 4px;
}
.b {
    font-weight: bold;
}
.red {
    color: #f00;
}
.done {
    text-decoration: line-through;
}
.selected td:nth-child(n+2) {
    border: dotted #222;
    border-width: 1px 0;
}
.selected td:nth-child(n+3) {
    background-color: #a7bbd3;
}
.selected td:nth-child(2) {
    border-left-width: 1px;
}
.selected td:last-child {
    border-right-width: 1px;
}
.mark {
    width: 8px;
    height: 16px;
}
.stop {
    width: 16px;
    height: 15px;
    margin: 0 auto;
}
.selected .tip-cell {
    position: relative;
    overflow: visible;
}
.tooltip {
    position: absolute;
    top: -1px;
    left: 0;
    padding: 1px 2px;
    border: 1px solid #555;
    border-width: 0 1px 1px 0;
    background-color: #ffffe1;
    box-shadow: 2px 2px 2px rgba(0, 0, 0, 0.5);
    color: #000;
    font-weight: normal;
}

/* status bar */
.statusbar {
    display: flex;
    align-items: flex-end;
    justify-content: space-between;
    height: 18px;
    background-color: #f1eded;
}
.statusbar span {
    width: 206px;
    padding: 0 0 1px 1px;
    border-right: 1px solid #d8d4d4;
}

/* context menu */
.context-menu {
    position: absolute;
    top: 168px;
    left: 564px;
    width: 273px;
    padding-bottom: 1px;
    border: 1px solid #979797;
    background: linear-gradient(90deg, #fdfdfd, #e6e7ea 25px, #fff 25px);
    box-shadow: 3px 3px 4px rgba(0, 0, 0, 0.35);
}
.context-menu li {
    height: 22px;
}
.context-menu li:nth-child(even) {
    height: 23px;
}
.context-menu button {
    display: grid;
    grid-template-columns: 16px 1fr 64px 4px;
    align-items: center;
    column-gap: 16px;
    width: 100%;
    height: 100%;
    padding: 0 7px 2px 4px;
    text-align: left;
    white-space: nowrap;
}
.context-menu button:disabled {
    color: #888;
}
.context-menu span {
    grid-column: 2;
    margin-left: -4px;
}
.context-menu kbd {
    grid-column: 3;
    text-align: right;
}
.context-menu .sub {
    grid-column: 4;
    width: 4px;
    height: 8px;
}
.context-menu li.line {
    height: 5px;
    margin-left: 32px;
    border-top: 1px solid #c8c8c8;
}
```
